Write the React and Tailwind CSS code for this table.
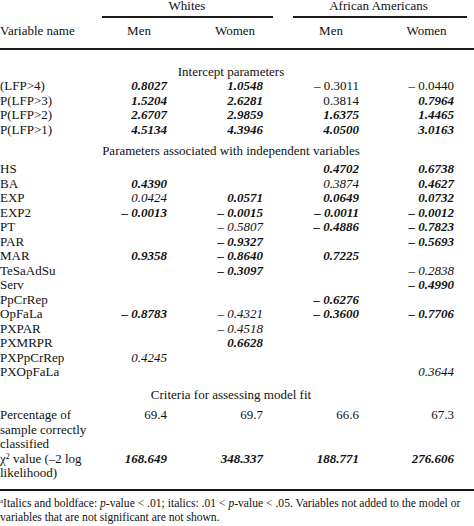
import React from 'react';

const styles = { bi: 'font-bold italic', i: 'italic', n: 'font-normal' };

const intercept = [
  ['(LFP>4)', [['0.8027', 'bi'], ['1.0548', 'bi'], ['– 0.3011', 'n'], ['– 0.0440', 'n']]],
  ['P(LFP>3)', [['1.5204', 'bi'], ['2.6281', 'bi'], ['0.3814', 'n'], ['0.7964', 'bi']]],
  ['P(LFP>2)', [['2.6707', 'bi'], ['2.9859', 'bi'], ['1.6375', 'bi'], ['1.4465', 'bi']]],
  ['P(LFP>1)', [['4.5134', 'bi'], ['4.3946', 'bi'], ['4.0500', 'bi'], ['3.0163', 'bi']]],
];

const params = [
  ['HS', [null, null, ['0.4702', 'bi'], ['0.6738', 'bi']]],
  ['BA', [['0.4390', 'bi'], null, ['0.3874', 'i'], ['0.4627', 'bi']]],
  ['EXP', [['0.0424', 'i'], ['0.0571', 'bi'], ['0.0649', 'bi'], ['0.0732', 'bi']]],
  ['EXP2', [['– 0.0013', 'bi'], ['– 0.0015', 'bi'], ['– 0.0011', 'bi'], ['– 0.0012', 'bi']]],
  ['PT', [null, ['– 0.5807', 'i'], ['– 0.4886', 'bi'], ['– 0.7823', 'bi']]],
  ['PAR', [null, ['– 0.9327', 'bi'], null, ['– 0.5693', 'bi']]],
  ['MAR', [['0.9358', 'bi'], ['– 0.8640', 'bi'], ['0.7225', 'bi'], null]],
  ['TeSaAdSu', [null, ['– 0.3097', 'bi'], null, ['– 0.2838', 'i']]],
  ['Serv', [null, null, null, ['– 0.4990', 'bi']]],
  ['PpCrRep', [null, null, ['– 0.6276', 'bi'], null]],
  ['OpFaLa', [['– 0.8783', 'bi'], ['– 0.4321', 'i'], ['– 0.3600', 'bi'], ['– 0.7706', 'bi']]],
  ['PXPAR', [null, ['– 0.4518', 'i'], null, null]],
  ['PXMRPR', [null, ['0.6628', 'bi'], null, null]],
  ['PXPpCrRep', [['0.4245', 'i'], null, null, null]],
  ['PXOpFaLa', [null, null, null, ['0.3644', 'i']]],
];

const grid = 'grid grid-cols-[91px_96px_96px_96px_95px]';

function Row({ label, cells }) {
  return (
    <div className={`${grid} h-[14.5px] leading-[14.5px]`}>
      <div className="whitespace-nowrap">{label}</div>
      {cells.map((c, i) => (
        <div key={i} className="text-right pr-[20px] whitespace-pre">
          {c ? <span className={styles[c[1]]}>{c[0]}</span> : null}
        </div>
      ))}
    </div>
  );
}

function Section({ children, className }) {
  return (
    <div className={`h-[14.5px] leading-[14.5px] text-center pr-3 ${className}`}>{children}</div>
  );
}

export default function App() {
  return (
    <div className="w-[474px] h-[526px] overflow-hidden bg-white text-[#111] text-[13px] font-['Liberation_Serif',serif]">
      <div className="-mt-[1px]">
        <div className="grid grid-cols-[91px_192px_191px] h-[14.5px] leading-[14.5px]">
          <div />
          <div className="text-center">Whites</div>
          <div className="text-center">African Americans</div>
        </div>
        <div className="grid grid-cols-[91px_192px_191px] mt-[2.5px]">
          <div />
          <div className="ml-[11px] mr-[10px] h-[1.5px] bg-[#1a1a1a]" />
          <div className="ml-[10px] mr-[7px] h-[1.5px] bg-[#1a1a1a]" />
        </div>
        <div className={`${grid} h-[14.5px] leading-[14.5px] mt-[6.5px]`}>
          <div className="whitespace-nowrap">Variable name</div>
          <div className="text-center">Men</div>
          <div className="text-center">Women</div>
          <div className="text-center">Men</div>
          <div className="text-center">Women</div>
        </div>
        <div className="h-[1.5px] bg-[#1a1a1a] mt-[9.5px]" />

        <Section className="mt-[15px]">Intercept parameters</Section>
        {intercept.map(([l, c]) => (
          <Row key={l} label={l} cells={c} />
        ))}

        <Section className="mt-[7px]">Parameters associated with independent variables</Section>
        <div className="mt-[3.5px]">
          {params.map(([l, c]) => (
            <Row key={l} label={l} cells={c} />
          ))}
        </div>

        <Section className="mt-[8.5px]">Criteria for assessing model fit</Section>
        <div className={`${grid} leading-[14.5px] mt-[5.5px]`}>
          <div className="whitespace-nowrap">
            Percentage of
            <br />
            sample correctly
            <br />
            classified
          </div>
          <div className="text-right pr-[20px]">69.4</div>
          <div className="text-right pr-[20px]">69.7</div>
          <div className="text-right pr-[20px]">66.6</div>
          <div className="text-right pr-[20px]">67.3</div>
        </div>
        <div className={`${grid} leading-[14.5px]`}>
          <div className="whitespace-nowrap">
            χ<sup className="text-[8px]">2</sup> value (–2 log
            <br />
            likelihood)
          </div>
          <div className="text-right pr-[20px] font-bold italic">168.649</div>
          <div className="text-right pr-[20px] font-bold italic">348.337</div>
          <div className="text-right pr-[20px] font-bold italic">188.771</div>
          <div className="text-right pr-[20px] font-bold italic">276.606</div>
        </div>

        <div className="h-[1.5px] bg-[#1a1a1a] mt-[8.5px]" />
        <div className="mt-[6px] text-[11.6px] leading-[14px] whitespace-nowrap">
          <p>
            <sup className="text-[7px]">a</sup>Italics and boldface: <span className="italic">p</span>-value &lt; .01; italics: .01 &lt;{' '}
            <span className="italic">p</span>-value &lt; .05. Variables not added to the model or
          </p>
          <p>variables that are not significant are not shown.</p>
        </div>
      </div>
    </div>
  );
}
